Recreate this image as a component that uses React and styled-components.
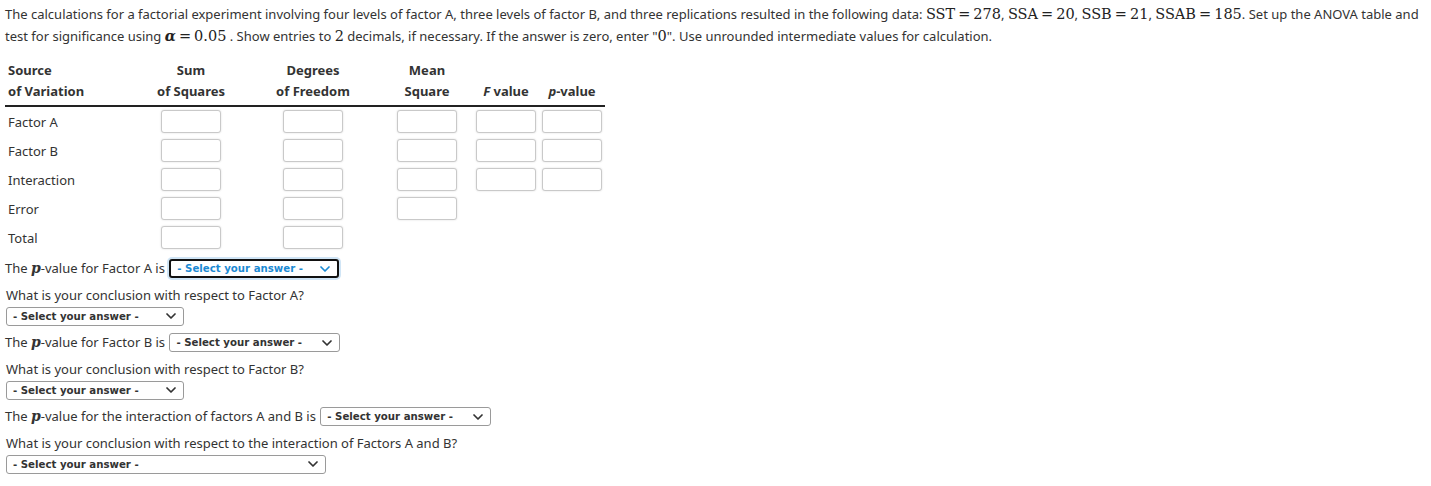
import React from 'react'
import styled, { createGlobalStyle } from 'styled-components'
import { ChevronDown } from 'lucide-react'

const GlobalStyle = createGlobalStyle`
    body{
        margin:0;
        background:#fff;
        color:#333;
        font-family:"Noto Sans", "Liberation Sans", Arial, sans-serif;
        font-size:13px;
    }
`

const rows = [
    { label: 'Factor A', cells: 5 },
    { label: 'Factor B', cells: 5 },
    { label: 'Interaction', cells: 5 },
    { label: 'Error', cells: 3 },
    { label: 'Total', cells: 2 },
]

function Select({ width, focused }) {
    return (
        <SelectBox $width={width} $focused={focused}>
            <span>- Select your answer -</span>
            <ChevronDown size={16} strokeWidth={2.6} />
        </SelectBox>
    )
}

const Eq = () => <EqSign>=</EqSign>

function App() {
    return (
        <Page>
            <GlobalStyle />
            <Intro>
                The calculations for a factorial experiment involving four levels of factor A, three levels of factor B, and three replications resulted in the following data: <M>SST<Eq />278</M>, <M>SSA<Eq />20</M>, <M>SSB<Eq />21</M>, <M>SSAB<Eq />185</M>. Set up the ANOVA table and<br />
                test for significance using <M><i>α</i><Eq />0.05</M> . Show entries to <M>2</M> decimals, if necessary. If the answer is zero, enter "<M>0</M>". Use unrounded intermediate values for calculation.
            </Intro>

            <Table>
                <Head>Source<br />of Variation</Head>
                <Head $center>Sum<br />of Squares</Head>
                <Head $center>Degrees<br />of Freedom</Head>
                <Head $center>Mean<br />Square</Head>
                <Head $center><br /><i>F</i> value</Head>
                <Head $center><br /><i>p</i>-value</Head>
                {rows.map(r => (
                    <React.Fragment key={r.label}>
                        <Label>{r.label}</Label>
                        {[0, 1, 2, 3, 4].map(i => (
                            <Cell key={i}>{i < r.cells ? <Input /> : null}</Cell>
                        ))}
                    </React.Fragment>
                ))}
            </Table>

            <InlineRow>The <PM>p</PM>-value for Factor A is <Select width={170} focused /></InlineRow>
            <Question>What is your conclusion with respect to Factor A?</Question>
            <SelectRow><Select width={178} /></SelectRow>
            <InlineRow>The <PM>p</PM>-value for Factor B is <Select width={171} /></InlineRow>
            <Question>What is your conclusion with respect to Factor B?</Question>
            <SelectRow><Select width={178} /></SelectRow>
            <InlineRow>The <PM>p</PM>-value for the interaction of factors A and B is <Select width={171} /></InlineRow>
            <Question>What is your conclusion with respect to the interaction of Factors A and B?</Question>
            <SelectRow><Select width={320} /></SelectRow>
        </Page>
    )
}

const Page = styled.div`
    padding:3px 0 0 5px;
`
const Intro = styled.p`
    margin:0;
    line-height:22px;
    white-space:nowrap;
`
const M = styled.span`
    font-family:"DejaVu Serif", "Liberation Serif", serif;
    font-size:14.5px;
    color:#222;
    i{
        font-style:italic;
        font-weight:bold;
    }
`
const EqSign = styled.span`
    margin:0 3px;
`
const PM = styled.i`
    font-family:"DejaVu Serif", "Liberation Serif", serif;
    font-size:14px;
    font-weight:bold;
`
const Table = styled.div`
    display:grid;
    grid-template-columns:132px 108px 136px 92px 66px 66px;
    width:600px;
    margin-top:13px;
`
const Head = styled.div`
    font-weight:bold;
    line-height:21px;
    text-align:${p => p.$center ? 'center' : 'left'};
    padding:0 ${p => p.$center ? '0' : '3px'} 3px;
    border-bottom:2px solid #222;
    i{
        font-style:italic;
    }
`
const Label = styled.div`
    height:29px;
    display:flex;
    align-items:center;
    padding-left:3px;
`
const Cell = styled.div`
    height:29px;
    display:flex;
    align-items:center;
    justify-content:center;
`
const Input = styled.input`
    width:60px;
    height:23px;
    box-sizing:border-box;
    border:1px solid #c9c9c9;
    border-radius:3px;
    box-shadow:0 0 2px rgba(0,0,0,0.15);
    background:#fff;
    padding:0;
`
const InlineRow = styled.div`
    height:32px;
    line-height:32px;
    white-space:nowrap;
    & > div{
        display:inline-flex;
        vertical-align:middle;
        margin-left:1px;
        margin-top:-2px;
    }
`
const Question = styled.div`
    line-height:22px;
    padding-left:1px;
`
const SelectRow = styled.div`
    height:20px;
    display:flex;
    align-items:center;
    padding-left:1px;
`
const SelectBox = styled.div`
    width:${p => p.$width}px;
    height:19px;
    box-sizing:border-box;
    display:flex;
    align-items:center;
    justify-content:space-between;
    padding:0 4px 0 6px;
    line-height:normal;
    border:${p => p.$focused ? '2px solid #111' : '1px solid #9a9a9a'};
    border-radius:3px;
    box-shadow:${p => p.$focused ? '0 0 0 2px rgba(120,180,230,0.35)' : 'none'};
    font-family:"DejaVu Sans", Verdana, sans-serif;
    font-size:10.2px;
    font-weight:bold;
    color:${p => p.$focused ? '#1b8ad3' : '#333'};
    svg{
        color:${p => p.$focused ? '#1b8ad3' : '#333'};
    }
`

export default App
